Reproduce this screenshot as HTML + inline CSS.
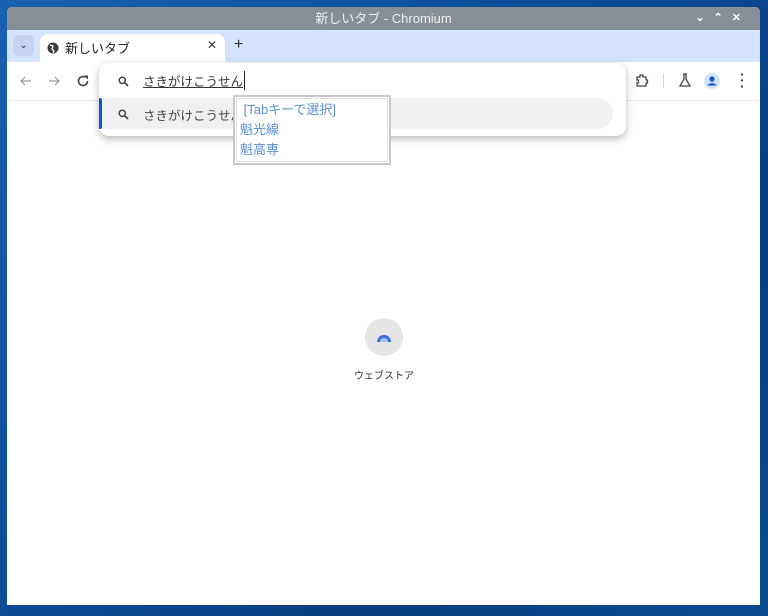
<!DOCTYPE html>
<html><head><meta charset="utf-8"><style>
*{margin:0;padding:0;box-sizing:border-box}
body{width:768px;height:616px;overflow:hidden;position:relative;font-family:"Liberation Sans","Noto Sans CJK JP",sans-serif;background:linear-gradient(135deg,#1a5fb0 0%,#0d4d9a 40%,#0a3d80 70%,#0b4a90 100%)}
.abs{position:absolute}
.win{left:7px;top:7px;width:753px;height:598px;background:#fff;border-radius:5px 5px 0 0;overflow:hidden}
.title{left:0;top:0;width:753px;height:23px;background:#878f96;color:#eef0f2;font-size:13px;text-align:center;line-height:23px}
.tabs{left:0;top:23px;width:753px;height:32px;background:#d3e3fd}
.tab{left:33px;top:4px;width:185px;height:28px;background:#fff;border-radius:8px 8px 0 0}
.tb{left:0;top:55px;width:753px;height:39px;background:#fff;border-bottom:1px solid #e6e6e6}
.drop{left:92px;top:56px;width:527px;height:73px;background:#fff;border-radius:10px;box-shadow:0 3px 8px rgba(0,0,0,.28)}
.sel{left:0;top:35px;width:514px;height:31px;background:#f0f0f0;border-radius:0 16px 16px 0}
.ime{left:226px;top:88px;width:158px;height:70px;background:#fff;border:2px solid #c8c8c8;outline:1px solid #e0e0e0;outline-offset:-4px;color:#5c8fd6;font-size:13px;line-height:20px;padding:3px 0 0 5px}
</style></head><body>
<div class="abs win">
 <div class="abs title">新しいタブ - Chromium</div>
 <div class="abs" style="right:10px;top:0;color:#fff;font-size:11px;line-height:23px;letter-spacing:9px;font-weight:bold">⌄⌃✕</div>
 <div class="abs tabs">
  <div class="abs" style="left:6px;top:5px;width:21px;height:21px;background:#c4d4ee;border-radius:6px;text-align:center;font-size:10px;line-height:21px;color:#333">⌄</div>
  <div class="abs tab">
   <svg class="abs" style="left:7px;top:8px" width="12" height="12" viewBox="0 0 12 12"><circle cx="6" cy="6" r="5.5" fill="#3c3c3c"/><path d="M3 3 L6 4 L5 7 L7 9 L6 11" stroke="#fff" stroke-width="1.3" fill="none"/></svg>
   <div class="abs" style="left:25px;top:4px;font-size:13px;color:#222">新しいタブ</div>
   <div class="abs" style="left:167px;top:4px;font-size:12px;color:#333">✕</div>
  </div>
  <div class="abs" style="left:227px;top:6px;font-size:16px;color:#333">+</div>
 </div>
 <div class="abs tb">
  <svg class="abs" style="left:12px;top:12px" width="14" height="14" viewBox="0 0 14 14"><path d="M12 7H2M6 3L2 7l4 4" fill="none" stroke="#aaa" stroke-width="1.4"/></svg>
  <svg class="abs" style="left:40px;top:12px" width="14" height="14" viewBox="0 0 14 14"><path d="M2 7h10M8 3l4 4-4 4" fill="none" stroke="#aaa" stroke-width="1.4"/></svg>
  <svg class="abs" style="left:69px;top:12px" width="14" height="14" viewBox="0 0 14 14"><path d="M11.5 7A4.5 4.5 0 1 1 9.5 3.3" fill="none" stroke="#444" stroke-width="1.6"/><path d="M8 1.5h4v4z" fill="#444"/></svg>
  <svg class="abs" style="left:628px;top:11px" width="14" height="14" viewBox="0 0 14 14"><path d="M2 4h3V2h3v2h3v3h1.5v3H11v3H2v-3h1.5V7H2z" fill="none" stroke="#444" stroke-width="1.3"/></svg>
  <div class="abs" style="left:656px;top:12px;width:1px;height:14px;background:#c8d6ee"></div>
  <svg class="abs" style="left:671px;top:11px" width="14" height="14" viewBox="0 0 14 14"><path d="M5 1h4M6 1v5L2 13h10L8 6V1" fill="none" stroke="#444" stroke-width="1.3"/></svg>
  <div class="abs" style="left:697px;top:11px;width:16px;height:16px;border-radius:50%;background:#d3e3fd"><svg width="16" height="16" viewBox="0 0 16 16"><circle cx="8" cy="6" r="2.6" fill="#0b57d0"/><path d="M3.5 12.5c1-3 8-3 9 0z" fill="#0b57d0"/></svg></div>
  <div class="abs" style="left:733px;top:9px;color:#444;font-size:14px;line-height:6px;font-weight:bold">·<br>·<br>·</div>
 </div>
 <div class="abs drop">
  <div class="abs sel"></div>
  <div class="abs" style="left:0;top:35px;width:3px;height:31px;background:#0b57d0;border-radius:0 2px 2px 0"></div>
  <svg class="abs" style="left:19px;top:13px" width="11" height="11" viewBox="0 0 11 11"><circle cx="4.3" cy="4.3" r="3.1" fill="none" stroke="#444" stroke-width="1.5"/><path d="M6.5 6.5L10 10" stroke="#444" stroke-width="1.7"/></svg>
  <svg class="abs" style="left:19px;top:46px" width="11" height="11" viewBox="0 0 11 11"><circle cx="4.3" cy="4.3" r="3.1" fill="none" stroke="#444" stroke-width="1.5"/><path d="M6.5 6.5L10 10" stroke="#444" stroke-width="1.7"/></svg>
  <div class="abs" style="left:44px;top:8px;font-size:12.5px;color:#333;text-decoration:underline;border-right:1px solid #222;padding-right:1px">さきがけこうせん</div>
  <div class="abs" style="left:44px;top:42px;font-size:12.5px;color:#444">さきがけこうせん</div>
 </div>
 <div class="abs ime"><div>&nbsp;[Tabキーで選択]</div><div>魁光線</div><div>魁高専</div></div>
 <div class="abs" style="left:358px;top:311px;width:38px;height:38px;border-radius:50%;background:#e6e6e6"><svg width="38" height="38" viewBox="0 0 38 38"><path d="M12 24a7 7 0 0 1 14 0z" fill="#3b6fe0"/><path d="M15 24a4 4 0 0 1 8 0z" fill="#a8c2f5"/></svg></div>
 <div class="abs" style="left:340px;top:360px;width:74px;text-align:center;font-size:10px;color:#333">ウェブストア</div>
</div>
</body></html>
